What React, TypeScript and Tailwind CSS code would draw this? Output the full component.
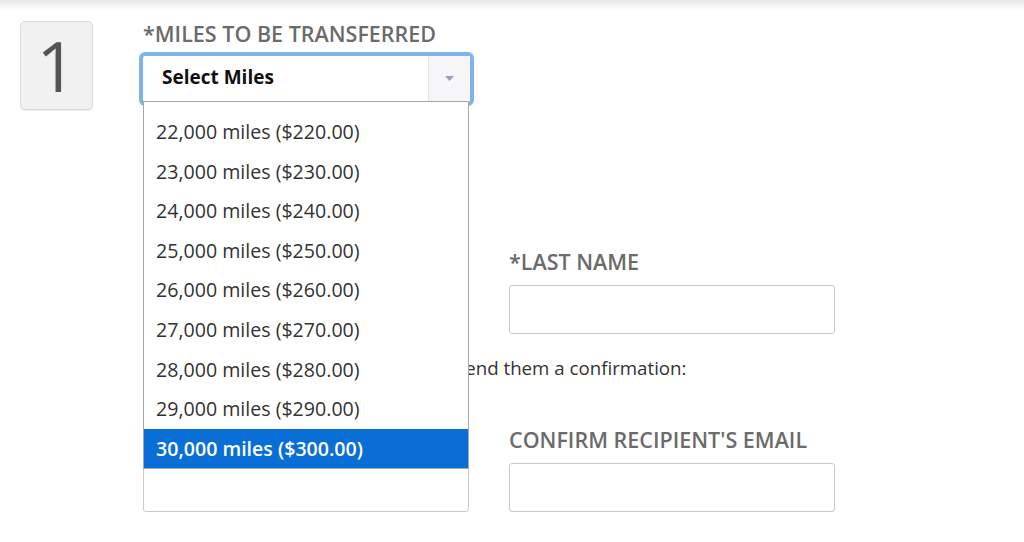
import React from "react";

const items = [
  "22,000 miles ($220.00)",
  "23,000 miles ($230.00)",
  "24,000 miles ($240.00)",
  "25,000 miles ($250.00)",
  "26,000 miles ($260.00)",
  "27,000 miles ($270.00)",
  "28,000 miles ($280.00)",
  "29,000 miles ($290.00)",
  "30,000 miles ($300.00)",
];

function Label({ children }: { children: React.ReactNode }) {
  return (
    <div className="text-[21.5px] leading-[26px] font-semibold text-[#6b6b6b] whitespace-nowrap">
      {children}
    </div>
  );
}

function Input() {
  return <div className="h-[49px] w-[326px] rounded-[3px] border border-[#cacaca] bg-white" />;
}

export default function App() {
  return (
    <div className="relative min-h-[542px] w-[1024px] overflow-hidden bg-white font-['Open_Sans',sans-serif] text-[#333]">
      <div className="pointer-events-none absolute inset-x-0 top-0 h-[10px] bg-gradient-to-b from-[#e8e8e8] to-white" />
      <div className="flex pt-[21px] pl-[20px]">
        <div className="flex h-[89px] w-[73px] items-center justify-center rounded-[5px] border border-[#dadada] bg-[#f1f1f1] shadow-[0_1px_1px_rgba(0,0,0,0.08)]">
          <span className="text-[70px] font-normal leading-none text-[#555] pb-[2px]">1</span>
        </div>
        <div className="ml-[50px] w-[692px]">
          <Label>*MILES TO BE TRANSFERRED</Label>
          <div className="relative z-10 mt-[5px] -ml-[4px] w-[335px]">
            <div className="rounded-[6px] border-4 border-[#7cb4eb] bg-white">
              <div className="flex h-[46px] border-b border-[#bdbdbd]">
                <div className="flex flex-1 items-center pl-[19px] pb-[2px] text-[19px] font-bold text-[#111]">
                  Select Miles
                </div>
                <div className="flex w-[42px] items-center justify-center border-l border-[#e2e2e2] bg-[#f6f6f8]">
                  <svg width="9" height="6" viewBox="0 0 9 6">
                    <path d="M0 0 L9 0 L4.5 5 Z" fill="#9a9fc0" />
                  </svg>
                </div>
              </div>
            </div>
            <div className="absolute left-[4px] top-[49px] w-[326px] border border-[#a8a8a8] bg-white pt-[10px]">
              {items.map((t, i) => {
                const sel = i === items.length - 1;
                return (
                  <div
                    key={t}
                    className={
                      sel
                        ? "flex h-[39.6px] items-center bg-[#0a6ed7] pl-[12px] text-[19.6px] font-semibold text-white"
                        : "flex h-[39.6px] items-center pl-[12px] text-[19.6px] text-[#333]"
                    }
                  >
                    {t}
                  </div>
                );
              })}
            </div>
          </div>
          <div className="mt-[143px] grid grid-cols-[326px_326px] gap-x-[40px]">
            <div>
              <Label>*FIRST NAME</Label>
              <div className="mt-[10px]">
                <Input />
              </div>
            </div>
            <div>
              <Label>*LAST NAME</Label>
              <div className="mt-[10px]">
                <Input />
              </div>
            </div>
          </div>
          <p className="mt-[21px] whitespace-nowrap text-[18.7px] leading-[26px] text-[#333]">
            Enter the recipient's email and we'll send them a confirmation:
          </p>
          <div className="mt-[46px] grid grid-cols-[326px_326px] gap-x-[40px]">
            <div>
              <Label>RECIPIENT'S EMAIL</Label>
              <div className="mt-[10px]">
                <Input />
              </div>
            </div>
            <div>
              <Label>CONFIRM RECIPIENT'S EMAIL</Label>
              <div className="mt-[10px]">
                <Input />
              </div>
            </div>
          </div>
        </div>
      </div>
    </div>
  );
}
